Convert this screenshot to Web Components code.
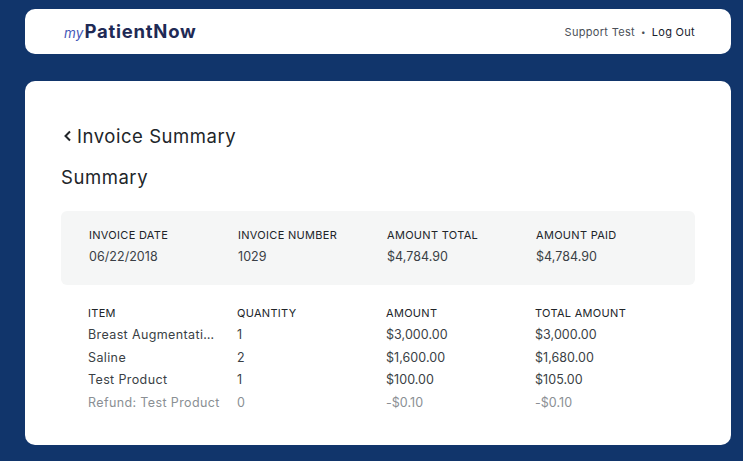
<!DOCTYPE html>
<html>
<head>
<meta charset="utf-8">
<title>Invoice Summary</title>
<style>
  html, body { height: 100%; }
  body { margin: 0; background: #11356b; font-family: Inter, "Open Sans", sans-serif; color: #212529; overflow: hidden; }
</style>
</head>
<body>
<app-page>
  <top-bar></top-bar>
  <invoice-card>
    <back-title slot="title">Invoice Summary</back-title>
    <h2 slot="sub" style="margin:0;font-weight:400;font-size:18.5px;line-height:24px;letter-spacing:.55px">Summary</h2>
    <summary-box></summary-box>
    <line-items></line-items>
  </invoice-card>
</app-page>

<script>
class AppPage extends HTMLElement {
  connectedCallback() {
    this.attachShadow({ mode: 'open' }).innerHTML = `
      <style>
        :host { display: flex; flex-direction: column; gap: 27px; padding: 9px 12px 0 25px; }
      </style>
      <slot></slot>`;
  }
}

class TopBar extends HTMLElement {
  connectedCallback() {
    this.attachShadow({ mode: 'open' }).innerHTML = `
      <style>
        :host { display: flex; align-items: center; justify-content: space-between; height: 45px; padding: 0 36px 0 39px; background: #fff; border-radius: 10px; }
        .logo { display: flex; align-items: baseline; padding-bottom: 2px; font-weight: 700; font-size: 18.5px; color: #1f2a55; letter-spacing: .75px; }
        .logo i { font-weight: 400; font-size: 13.5px; color: #4458b8; margin-right: 1px; letter-spacing: .1px; }
        nav { display: flex; align-items: center; font-size: 11px; letter-spacing: .3px; color: #4a4f57; }
        .dot { margin: 0 6px; font-size: 8px; }
        a { color: #17202b; text-decoration: none; }
      </style>
      <div class="logo"><i>my</i>PatientNow</div>
      <nav><span>Support Test</span><span class="dot">•</span><a href="#">Log Out</a></nav>`;
  }
}

class InvoiceCard extends HTMLElement {
  connectedCallback() {
    this.attachShadow({ mode: 'open' }).innerHTML = `
      <style>
        :host { display: block; height: 364px; box-sizing: border-box; padding: 43px 36px 0; background: #fff; border-radius: 10px; }
        .sub { display: block; margin: 17px 0 22px; }
      </style>
      <slot name="title"></slot>
      <div class="sub"><slot name="sub"></slot></div>
      <slot></slot>`;
  }
}

class BackTitle extends HTMLElement {
  connectedCallback() {
    this.attachShadow({ mode: 'open' }).innerHTML = `
      <style>
        :host { display: flex; align-items: center; gap: 5px; height: 24px; font-size: 18.5px; letter-spacing: .55px; color: #212529; }
        svg { width: 9px; height: 12px; margin-left: 2px; }
      </style>
      <svg viewBox="0 0 9 12"><path d="M7 1.5 2.5 6 7 10.5" fill="none" stroke="#212529" stroke-width="2"/></svg>
      <slot></slot>`;
  }
}

const cellStyles = `
  .row { display: grid; grid-template-columns: repeat(4, 149px); }
  .head { font-size: 11px; letter-spacing: .3px; color: #212529; }
  .val { font-size: 12.5px; letter-spacing: .05px; color: #3a3f45; }
`;

class SummaryBox extends HTMLElement {
  connectedCallback() {
    const fields = [
      ['INVOICE DATE', '06/22/2018'],
      ['INVOICE NUMBER', '1029'],
      ['AMOUNT TOTAL', '$4,784.90'],
      ['AMOUNT PAID', '$4,784.90']
    ];
    this.attachShadow({ mode: 'open' }).innerHTML = `
      <style>
        :host { display: block; height: 74px; box-sizing: border-box; padding: 15px 28px 0; background: #f5f6f6; border-radius: 6px; }
        ${cellStyles}
        .head { line-height: 18px; }
        .val { line-height: 25px; }
      </style>
      <div class="row">${fields.map(f => `<div><div class="head">${f[0]}</div><div class="val">${f[1]}</div></div>`).join('')}</div>`;
  }
}

class LineItems extends HTMLElement {
  connectedCallback() {
    const rows = [
      ['Breast Augmentati…', '1', '$3,000.00', '$3,000.00'],
      ['Saline', '2', '$1,600.00', '$1,680.00'],
      ['Test Product', '1', '$100.00', '$105.00'],
      ['Refund: Test Product', '0', '-$0.10', '-$0.10']
    ];
    this.attachShadow({ mode: 'open' }).innerHTML = `
      <style>
        :host { display: block; padding: 19px 27px 0; }
        ${cellStyles}
        .row { line-height: 22.7px; }
        .row.head { line-height: 19px; margin-bottom: 1px; }
        .val.name { white-space: nowrap; letter-spacing: .38px; }
        .refund .val { color: #8a8f94; }
      </style>
      <div class="row head"><div>ITEM</div><div>QUANTITY</div><div>AMOUNT</div><div>TOTAL AMOUNT</div></div>
      ${rows.map((r, i) => `<div class="row ${i === 3 ? 'refund' : ''}">
        <div class="val name">${r[0]}</div><div class="val">${r[1]}</div><div class="val">${r[2]}</div><div class="val">${r[3]}</div>
      </div>`).join('')}`;
  }
}

customElements.define('app-page', AppPage);
customElements.define('top-bar', TopBar);
customElements.define('invoice-card', InvoiceCard);
customElements.define('back-title', BackTitle);
customElements.define('summary-box', SummaryBox);
customElements.define('line-items', LineItems);
</script>
</body>
</html>
